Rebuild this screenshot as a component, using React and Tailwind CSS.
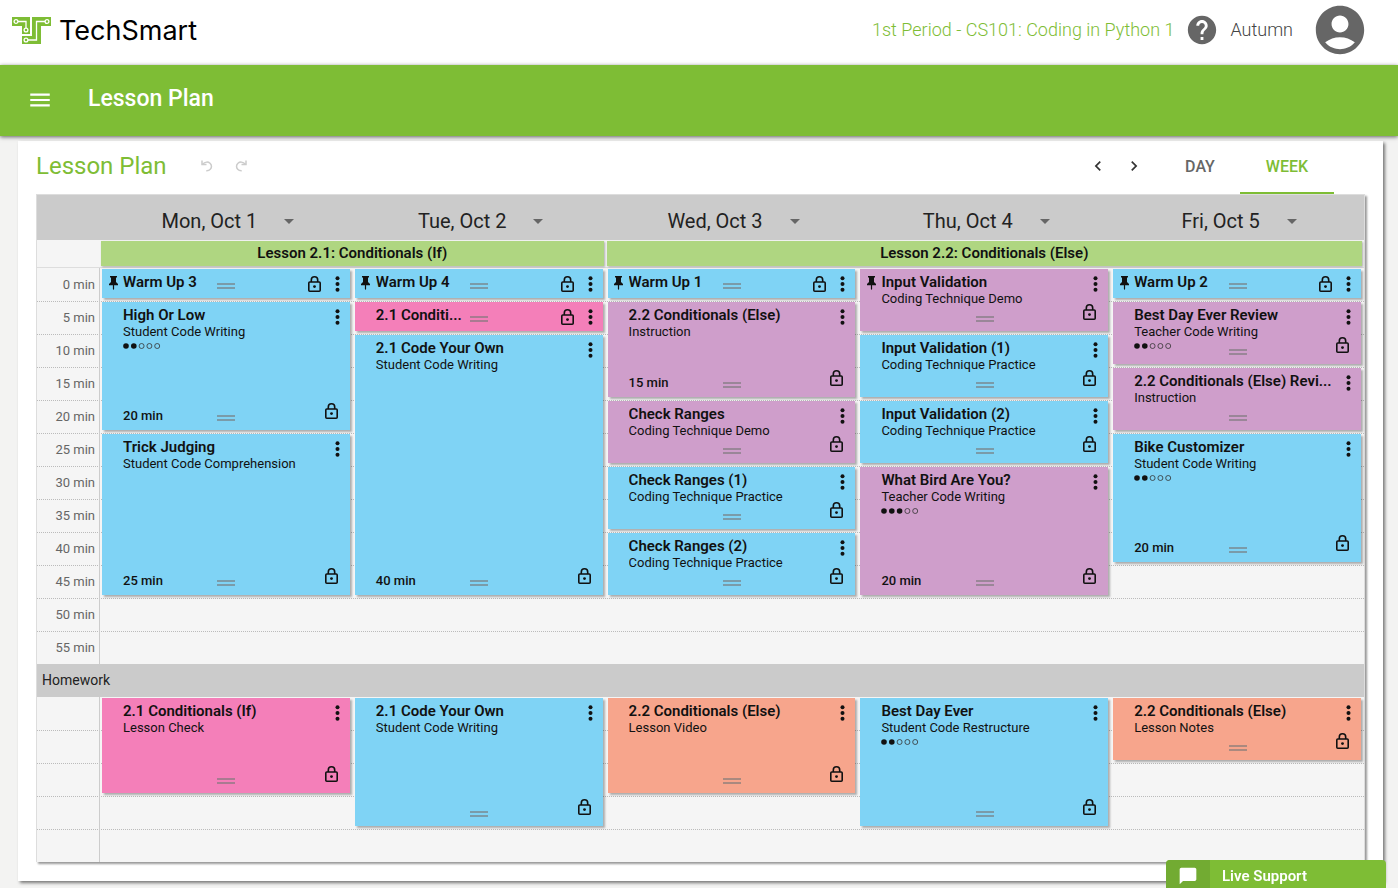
import React from "react";
import clsx from "clsx";
import {
  MdAccountCircle,
  MdArrowDropDown,
  MdChatBubble,
  MdChevronLeft,
  MdChevronRight,
  MdHelp,
  MdMenu,
} from "react-icons/md";

const DAYS = ["Mon, Oct 1", "Tue, Oct 2", "Wed, Oct 3", "Thu, Oct 4", "Fri, Oct 5"];

const MINUTES = [0, 5, 10, 15, 20, 25, 30, 35, 40, 45, 50, 55];

const COLORS = {
  blue: "bg-[#7fd3f5]",
  purple: "bg-[#cf9ecb]",
  pink: "bg-[#f47fb9]",
  orange: "bg-[#f7a58c]",
};

// day: column, start: first row, rows: height in 5 minute slots
const ACTIVITIES = [
  { day: 0, start: 0, rows: 1, color: "blue", title: "Warm Up 3", pinned: true, lock: true },
  { day: 0, start: 1, rows: 4, color: "blue", title: "High Or Low", kind: "Student Code Writing", level: 2, duration: "20 min", lock: true },
  { day: 0, start: 5, rows: 5, color: "blue", title: "Trick Judging", kind: "Student Code Comprehension", duration: "25 min", lock: true },
  { day: 1, start: 0, rows: 1, color: "blue", title: "Warm Up 4", pinned: true, lock: true },
  { day: 1, start: 1, rows: 1, color: "pink", title: "2.1 Conditi...", lock: true },
  { day: 1, start: 2, rows: 8, color: "blue", title: "2.1 Code Your Own", kind: "Student Code Writing", duration: "40 min", lock: true },
  { day: 2, start: 0, rows: 1, color: "blue", title: "Warm Up 1", pinned: true, lock: true },
  { day: 2, start: 1, rows: 3, color: "purple", title: "2.2 Conditionals (Else)", kind: "Instruction", duration: "15 min", lock: true },
  { day: 2, start: 4, rows: 2, color: "purple", title: "Check Ranges", kind: "Coding Technique Demo", lock: true },
  { day: 2, start: 6, rows: 2, color: "blue", title: "Check Ranges (1)", kind: "Coding Technique Practice", lock: true },
  { day: 2, start: 8, rows: 2, color: "blue", title: "Check Ranges (2)", kind: "Coding Technique Practice", lock: true },
  { day: 3, start: 0, rows: 2, color: "purple", title: "Input Validation", kind: "Coding Technique Demo", pinned: true, lock: true },
  { day: 3, start: 2, rows: 2, color: "blue", title: "Input Validation (1)", kind: "Coding Technique Practice", lock: true },
  { day: 3, start: 4, rows: 2, color: "blue", title: "Input Validation (2)", kind: "Coding Technique Practice", lock: true },
  { day: 3, start: 6, rows: 4, color: "purple", title: "What Bird Are You?", kind: "Teacher Code Writing", level: 3, duration: "20 min", lock: true },
  { day: 4, start: 0, rows: 1, color: "blue", title: "Warm Up 2", pinned: true, lock: true },
  { day: 4, start: 1, rows: 2, color: "purple", title: "Best Day Ever Review", kind: "Teacher Code Writing", level: 2, lock: true },
  { day: 4, start: 3, rows: 2, color: "purple", title: "2.2 Conditionals (Else) Revi...", kind: "Instruction" },
  { day: 4, start: 5, rows: 4, color: "blue", title: "Bike Customizer", kind: "Student Code Writing", level: 2, duration: "20 min", lock: true },
];

const HOMEWORK = [
  { day: 0, start: 0, rows: 3, color: "pink", title: "2.1 Conditionals (If)", kind: "Lesson Check", lock: true },
  { day: 1, start: 0, rows: 4, color: "blue", title: "2.1 Code Your Own", kind: "Student Code Writing", lock: true },
  { day: 2, start: 0, rows: 3, color: "orange", title: "2.2 Conditionals (Else)", kind: "Lesson Video", lock: true },
  { day: 3, start: 0, rows: 4, color: "blue", title: "Best Day Ever", kind: "Student Code Restructure", level: 2, lock: true },
  { day: 4, start: 0, rows: 2, color: "orange", title: "2.2 Conditionals (Else)", kind: "Lesson Notes", lock: true },
];

const Logo = () => (
  <svg width="39" height="28" viewBox="0 0 39 28" fill="none" aria-hidden="true">
    <path d="M0 0h18v17h-8V9H0z" fill="#7ebd35" />
    <path d="M20 0h19v9H29v18H10v-8h10z" fill="#7ebd35" />
    <g stroke="#fff" strokeWidth="1.3">
      <circle cx="4" cy="4.5" r="1.9" />
      <path d="M6 4.5h8v6.5" />
      <circle cx="14" cy="13" r="1.9" />
      <circle cx="35" cy="4.5" r="1.9" />
      <path d="M33 4.500h-8.500v18.500H16" />
      <circle cx="14" cy="23" r="1.9" />
    </g>
  </svg>
);

const UndoIcon = ({ className }) => (
  <svg width="12" height="12" viewBox="0 0 12 12" fill="none" stroke="currentColor" strokeWidth="1.5" className={className} aria-hidden="true">
    <path d="M1 .5v4h4.5" />
    <path d="M1.500 4.200C4 1.600 7.200 1.600 9 3.200c1.900 1.700 1.900 4.300.3 6-.9 1-2.200 1.600-4 1.500" />
  </svg>
);

const LockIcon = () => (
  <svg width="13" height="16" viewBox="0 0 13 16" fill="none" stroke="#111" strokeWidth="1.6" aria-hidden="true">
    <rect x="0.8" y="6" width="11.4" height="9.2" rx="1" />
    <path d="M3.300 6V4a3.200 3.200 0 0 1 6.400 0v2" />
    <circle cx="6.5" cy="10.6" r="1.4" fill="#111" stroke="none" />
  </svg>
);

const PinIcon = () => (
  <svg width="9" height="14" viewBox="0 0 9 14" fill="#111" aria-hidden="true">
    <path d="M1 0h7v1.500H7V6l2 2v1.200H5.100V13l-.6 1-.6-1V9.200H0V8l2-2V1.500H1z" />
  </svg>
);

const MoreIcon = () => (
  <svg width="5" height="16" viewBox="0 0 5 16" fill="#111" aria-hidden="true">
    <circle cx="2.5" cy="2.2" r="2" />
    <circle cx="2.5" cy="8" r="2" />
    <circle cx="2.5" cy="13.8" r="2" />
  </svg>
);

const Level = ({ value }) => (
  <svg width="38" height="6" viewBox="0 0 38 6" className="mt-[3px]" role="img" aria-label={`Level ${value} of 5`}>
    {[0, 1, 2, 3, 4].map((i) => (
      <circle
        key={i}
        cx={3 + i * 7.8}
        cy="3"
        r={i < value ? 2.8 : 2.5}
        fill={i < value ? "#111" : "none"}
        stroke={i < value ? "none" : "#333"}
        strokeWidth="0.8"
      />
    ))}
  </svg>
);

const Activity = ({ item }) => {
  const compact = item.rows === 1;
  return (
    <div
      className="min-w-0 pt-px pr-[3px] pb-[3px] pl-[2px]"
      style={{
        gridColumn: item.day + 2,
        gridRow: `${item.start + 1} / span ${item.rows}`,
      }}
    >
      <article
        className={clsx(
          "grid h-full grid-cols-1 text-[#111] shadow-[2px_2px_2px_rgba(0,0,0,0.3)]",
          COLORS[item.color]
        )}
      >
        <div className="col-start-1 row-start-1 flex min-w-0 items-start pt-[7px] pr-[10px]">
          <div className="flex w-[21px] shrink-0 justify-center pl-px">
            {item.pinned && <PinIcon />}
          </div>
          <div className="-mt-[3px] min-w-0 flex-1">
            <h3 className="truncate text-[15px] leading-[18px] font-semibold">{item.title}</h3>
            <p className="truncate text-[13px] leading-4">{item.kind}</p>
            {item.level && <Level value={item.level} />}
          </div>
          {compact && item.lock && (
            <button className="mr-[14px]" aria-label="Unlock">
              <LockIcon />
            </button>
          )}
          <button className={clsx(!compact && "ml-2")} aria-label="Activity options">
            <MoreIcon />
          </button>
        </div>
        <div className="pointer-events-none col-start-1 row-start-1 grid grid-cols-3 items-end self-end pr-3 pb-[9px] pl-[21px]">
          <span className="text-[13px] leading-[10px] font-medium">{item.duration}</span>
          <span className="mr-2 h-[6px] w-[18px] justify-self-center border-y-2 border-[#777]/60" />
          {!compact && item.lock && (
            <button className="pointer-events-auto mb-[2px] justify-self-end" aria-label="Unlock">
              <LockIcon />
            </button>
          )}
        </div>
      </article>
    </div>
  );
};

const Slots = ({ labels, items }) => (
  <div className="grid auto-rows-[33px] grid-cols-[63px_repeat(5,minmax(0,1fr))]">
    {labels.map((label, i) => (
      <React.Fragment key={i}>
        <div
          className={clsx(
            "col-span-6 col-start-1 border-dotted border-[#bbb]",
            i > 0 && "border-t"
          )}
          style={{ gridRow: i + 1 }}
        />
        <div
          className="col-start-1 border-r border-[#ccc] pr-1 text-right text-[13px] leading-[33px] text-[#666]"
          style={{ gridRow: i + 1 }}
        >
          {label}
        </div>
      </React.Fragment>
    ))}
    {items.map((item) => (
      <Activity key={`${item.day}-${item.start}`} item={item} />
    ))}
  </div>
);

const Header = () => (
  <header className="flex h-[65px] items-center justify-between bg-white pr-[29px] pl-3">
    <a href="#" className="flex items-center gap-2 pb-1">
      <Logo />
      <span className="font-['Inter',sans-serif] text-[27px] leading-8 text-black">TechSmart</span>
    </a>
    <div className="flex items-center pb-[6px] text-lg font-light text-[#444]">
      <a href="#" className="text-[#7ebd35]">
        1st Period - CS101: Coding in Python 1
      </a>
      <button className="ml-[11px] text-[#666]" aria-label="Help">
        <MdHelp size={34} />
      </button>
      <span className="ml-[11px]">Autumn</span>
      <button className="ml-[18px] text-[#666]" aria-label="Account">
        <MdAccountCircle size={58} />
      </button>
    </div>
  </header>
);

const Toolbar = () => (
  <div className="flex h-[53px] justify-between pr-[31px]">
    <div className="flex items-center pb-1">
      <h2 className="text-2xl text-[#7ebd35]">Lesson Plan</h2>
      <button className="ml-[34px] text-[#ccc]" aria-label="Undo">
        <UndoIcon />
      </button>
      <button className="ml-[22px] text-[#ccc]" aria-label="Redo">
        <UndoIcon className="-scale-x-100" />
      </button>
    </div>
    <div className="flex items-center">
      <button className="flex w-9 justify-center pb-1 text-[#333]" aria-label="Previous week">
        <MdChevronLeft size={20} />
      </button>
      <button className="flex w-9 justify-center pb-1 text-[#333]" aria-label="Next week">
        <MdChevronRight size={20} />
      </button>
      <button className="ml-2 h-full w-20 border-b-2 border-transparent font-medium text-[#666]">
        DAY
      </button>
      <button className="h-full w-[94px] border-b-2 border-[#7ebd35] font-medium text-[#7ebd35]">
        WEEK
      </button>
    </div>
  </div>
);

const Schedule = () => (
  <div className="border-t border-r border-l border-[#ddd] bg-[#f5f5f5] shadow-[2px_2px_2px_rgba(0,0,0,0.4)]">
    <div className="grid h-[45px] grid-cols-[63px_repeat(5,minmax(0,1fr))] bg-[#cbcbcb]">
      {DAYS.map((day, i) => (
        <button
          key={day}
          className={clsx(
            "flex items-center justify-center gap-5 pt-[6px] pl-[10px] text-xl text-[#222]",
            i === 0 && "col-start-2"
          )}
        >
          {day}
          <MdArrowDropDown size={24} className="text-[#666]" />
        </button>
      ))}
    </div>
    <div className="grid h-7 grid-cols-[63px_repeat(5,minmax(0,1fr))] border-b border-[#ddd] text-[15px] leading-[25px] font-semibold text-[#111]">
      <div className="col-span-2 col-start-2 pt-px pr-[2px] pb-px pl-px">
        <div className="h-full bg-[#afd681] text-center shadow-[1px_1px_2px_rgba(0,0,0,0.3)]">
          Lesson 2.1: Conditionals (If)
        </div>
      </div>
      <div className="col-span-3 pt-px pr-[2px] pb-px pl-px">
        <div className="h-full bg-[#afd681] text-center shadow-[1px_1px_2px_rgba(0,0,0,0.3)]">
          Lesson 2.2: Conditionals (Else)
        </div>
      </div>
    </div>
    <Slots labels={MINUTES.map((m) => `${m} min`)} items={ACTIVITIES} />
    <h3 className="h-[33px] bg-[#cbcbcb] pl-[5px] text-sm leading-8 text-[#222]">Homework</h3>
    <Slots labels={["", "", "", "", ""]} items={HOMEWORK} />
  </div>
);

export default function App() {
  return (
    <div className="min-h-screen bg-[#f3f3f2] font-['Roboto',sans-serif]">
      <Header />
      <div className="relative flex h-[71px] items-center bg-[#7ebd35] px-[27px] pb-[2px] text-white shadow-[0_1px_4px_rgba(0,0,0,0.6)]">
        <button aria-label="Menu">
          <MdMenu size={26} />
        </button>
        <h1 className="ml-[35px] text-[23px] font-medium">Lesson Plan</h1>
      </div>
      <main className="mt-[5px] mr-[15px] ml-[18px] bg-white px-[18px] pb-[19px] shadow-[2px_2px_3px_rgba(0,0,0,0.5)]">
        <Toolbar />
        <Schedule />
      </main>
      <button className="fixed right-3 bottom-0 flex h-7 w-[220px] items-stretch overflow-hidden rounded-t bg-[#7ebd35] text-[15px] font-semibold text-white">
        <span className="flex w-11 items-center justify-center bg-[#72ab32] pt-1">
          <MdChatBubble size={20} />
        </span>
        <span className="pl-3 leading-8">Live Support</span>
      </button>
    </div>
  );
}
